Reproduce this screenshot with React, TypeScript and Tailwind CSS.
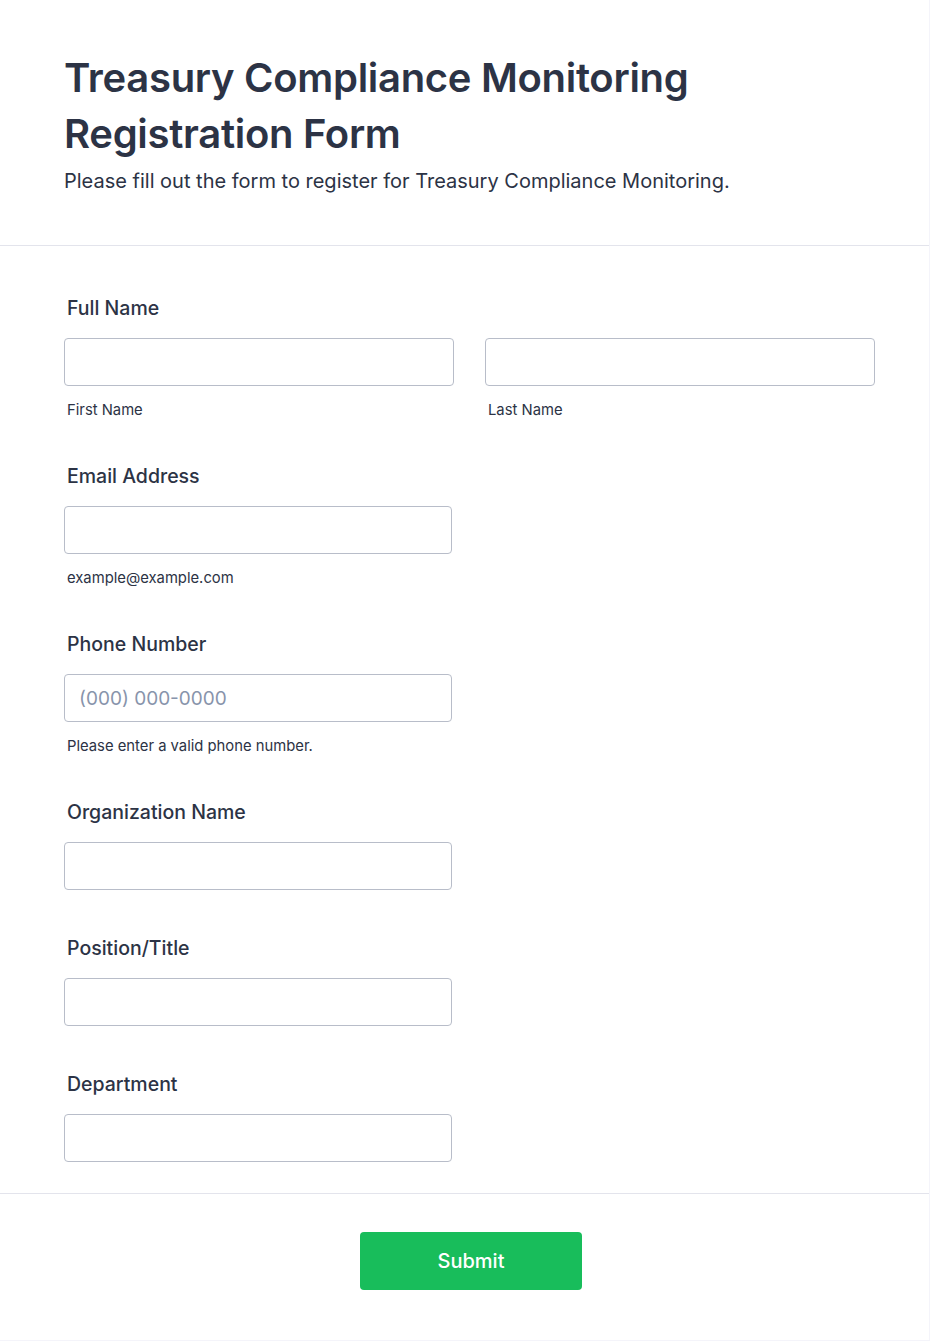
import React from "react";

const font = { fontFamily: "Inter, 'Noto Sans', sans-serif" };

function Label({ children }: { children: React.ReactNode }) {
  return (
    <div className="pl-[3px] text-[19.5px] leading-[27px] font-medium text-[#2c3345] mb-[16px]">
      {children}
    </div>
  );
}

function Input({ placeholder, className = "" }: { placeholder?: string; className?: string }) {
  return (
    <input
      type="text"
      placeholder={placeholder}
      className={
        "block h-[48px] rounded-[4px] border border-[#b8bdc9] bg-white px-[14px] text-[19px] text-[#2c3345] placeholder:text-[#8894ab] outline-none " +
        className
      }
      style={font}
    />
  );
}

function Sub({ children }: { children: React.ReactNode }) {
  return (
    <div className="pl-[3px] mt-[13px] text-[14.8px] leading-[22px] text-[#2c3345]">{children}</div>
  );
}

export default function App() {
  return (
    <div className="w-[930px] min-h-[1341px] bg-white border-r border-b border-[#f4f4fa]" style={font}>
      <div className="pl-[64px] pr-[40px] pt-[50px] pb-[50px] border-b border-[#e3e4ec]">
        <h1 className="text-[40px] leading-[56px] font-semibold text-[#2c3345] tracking-[-0.3px]">
          Treasury Compliance Monitoring Registration Form
        </h1>
        <p className="mt-[5px] text-[20px] leading-[28px] text-[#2c3345]">
          Please fill out the form to register for Treasury Compliance Monitoring.
        </p>
      </div>

      <div className="pl-[64px] pr-[54px] pt-[49px] pb-[31px] border-b border-[#e3e4ec]">
        <div className="mb-[42px]">
          <Label>Full Name</Label>
          <div className="flex gap-[31px]">
            <div className="w-[390px]">
              <Input className="w-full" />
              <Sub>First Name</Sub>
            </div>
            <div className="w-[390px]">
              <Input className="w-full" />
              <Sub>Last Name</Sub>
            </div>
          </div>
        </div>

        <div className="mb-[42px]">
          <Label>Email Address</Label>
          <Input className="w-[388px]" />
          <Sub>example@example.com</Sub>
        </div>

        <div className="mb-[42px]">
          <Label>Phone Number</Label>
          <Input className="w-[388px]" placeholder="(000) 000-0000" />
          <Sub>Please enter a valid phone number.</Sub>
        </div>

        <div className="mb-[45px]">
          <Label>Organization Name</Label>
          <Input className="w-[388px]" />
        </div>

        <div className="mb-[45px]">
          <Label>Position/Title</Label>
          <Input className="w-[388px]" />
        </div>

        <div>
          <Label>Department</Label>
          <Input className="w-[388px]" />
        </div>
      </div>

      <div className="flex justify-center pt-[38px] pb-[50px]">
        <button
          type="button"
          className="ml-[13px] w-[222px] h-[58px] rounded-[4px] bg-[#18bd5b] text-white text-[20px] font-medium"
          style={font}
        >
          Submit
        </button>
      </div>
    </div>
  );
}
